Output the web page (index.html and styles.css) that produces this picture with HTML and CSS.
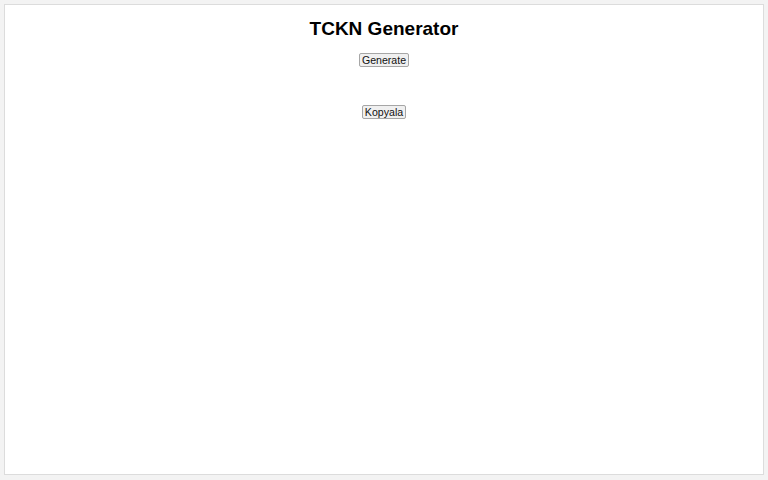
FILE: index.html
```html
<!DOCTYPE html>
<html lang="tr">
<head>
<meta charset="utf-8">
<title>TCKN Generator</title>
<link rel="stylesheet" href="styles.css">
</head>
<body>
<div class="frame">
  <h1 class="title">TCKN Generator</h1>
  <div class="row first"><button class="btn" type="button">Generate</button></div>
  <div class="output"></div>
  <div class="row"><button class="btn" type="button">Kopyala</button></div>
</div>
</body>
</html>
```
FILE: styles.css
```css
html, body {
  margin: 0;
  padding: 0;
  height: 100%;
}
body {
  background: #f3f3f3;
  padding: 4px 4px 5px 4px;
  box-sizing: border-box;
  font-family: "Liberation Sans", Arial, sans-serif;
  color: #000;
}
.frame {
  background: #fff;
  border: 1px solid #dcdcdc;
  height: 100%;
  box-sizing: border-box;
  padding-top: 12px;
  text-align: center;
}
.title {
  margin: 0;
  font-size: 19px;
  line-height: 23px;
  font-weight: bold;
}
.row {
  display: flex;
  justify-content: center;
}
.row.first {
  margin-top: 13px;
}
.btn {
  font-family: "Liberation Sans", Arial, sans-serif;
  font-size: 10.6px;
  line-height: 12px;
  padding: 0 2px;
  margin: 0;
  background: #f0f0f0;
  border: 1px solid #a6a6a6;
  border-radius: 2px;
  color: #111;
}
.output {
  height: 38px;
}
```
